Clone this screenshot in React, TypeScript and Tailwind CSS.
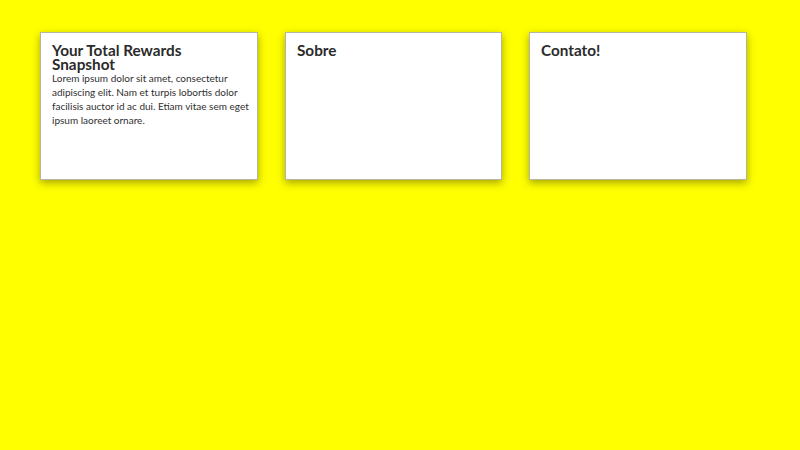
import React from "react";

type CardProps = { title: string; body?: string; width: string };

function Card({ title, body, width }: CardProps) {
  return (
    <div
      className={`${width} h-[148px] bg-white border border-[#b5b5a0] shadow-[0_3px_8px_rgba(0,0,0,0.35)] pl-[11px] pr-[8px] pt-[8px]`}
    >
      <h2 className="max-w-[185px] text-[15.3px] leading-[14px] font-bold text-[#2b2b2b] pt-[2px]">
        {title}
      </h2>
      {body && (
        <p className="text-[10px] leading-[14px] text-[#2f2f2f]">{body}</p>
      )}
    </div>
  );
}

export default function App() {
  return (
    <div
      className="w-[800px] h-[450px] bg-[#ffff00] pl-[40px] pt-[32px]"
      style={{ fontFamily: "Lato, 'Open Sans', sans-serif" }}
    >
      <div className="flex gap-[27px]">
        <Card
          width="w-[218px]"
          title="Your Total Rewards Snapshot"
          body="Lorem ipsum dolor sit amet, consectetur adipiscing elit. Nam et turpis lobortis dolor facilisis auctor id ac dui. Etiam vitae sem eget ipsum laoreet ornare."
        />
        <Card width="w-[217px]" title="Sobre" />
        <Card width="w-[218px]" title="Contato!" />
      </div>
    </div>
  );
}
